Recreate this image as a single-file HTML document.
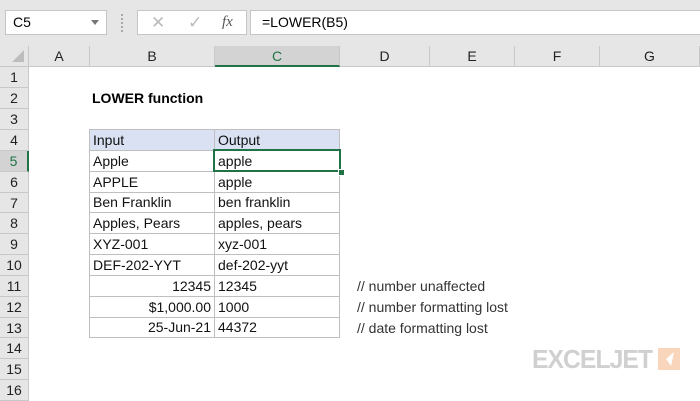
<!DOCTYPE html>
<html><head><style>
body{margin:0;width:700px;height:400px;overflow:hidden;background:#fff;font-family:"Liberation Sans",sans-serif;position:relative}
.a{position:absolute;box-sizing:border-box}
.top{left:0;top:0;width:700px;height:46px;background:#e6e6e6}
.box{background:#fff;border:1px solid #c6c6c6}
.ch{top:46px;height:21px;background:#e6e6e6;border-right:1px solid #c8c8c8;border-bottom:1px solid #c8c8c8;text-align:center;font-size:14px;line-height:21px;color:#222}
.rh{left:0;width:29px;background:#e6e6e6;border-bottom:1px solid #c8c8c8;border-right:1px solid #c8c8c8;text-align:center;font-size:14px;color:#222}
.c{font-size:14px;color:#111;padding:0 3px;white-space:nowrap;border-right:1px solid #bfbfbf;border-bottom:1px solid #bfbfbf}
.r{text-align:right}
.n{font-size:14px;color:#333;white-space:nowrap}
</style></head><body>
<div class="a top"></div>
<div class="a box" style="left:5px;top:10px;width:102px;height:25px;font-size:14px;line-height:23px;padding-left:7px">C5<span style="position:absolute;right:7px;top:9px;width:0;height:0;border-left:4px solid transparent;border-right:4px solid transparent;border-top:5px solid #777"></span></div>
<div class="a" style="left:121px;top:14px;width:2px;height:18px;border-left:2px dotted #aaa"></div>
<div class="a box" style="left:137px;top:10px;width:110px;height:25px;font-size:17px;line-height:23px;color:#bbb"><span style="position:absolute;left:13px">✕</span><span style="position:absolute;left:50px">✓</span><span style="position:absolute;left:84px;color:#555;font-family:'Liberation Serif',serif;font-style:italic;font-size:15px">fx</span></div>
<div class="a box" style="left:250px;top:10px;width:460px;height:25px;font-size:14px;line-height:23px;padding-left:11px">=LOWER(B5)</div>
<div class="a" style="left:0;top:46px;width:29px;height:21px;background:#e6e6e6;border-right:1px solid #c8c8c8;border-bottom:1px solid #c8c8c8"><div style="position:absolute;right:4px;bottom:4px;width:0;height:0;border-left:12px solid transparent;border-bottom:12px solid #bdbdbd"></div></div>
<div class="a ch" style="left:29px;width:61px">A</div>
<div class="a ch" style="left:90px;width:125px">B</div>
<div class="a ch" style="left:215px;width:125px;background:#d3d3d3;border-bottom:2px solid #217346;color:#217346">C</div>
<div class="a ch" style="left:340px;width:90px">D</div>
<div class="a ch" style="left:430px;width:85px">E</div>
<div class="a ch" style="left:515px;width:85px">F</div>
<div class="a ch" style="left:600px;width:100px">G</div>
<div class="a rh" style="top:67px;height:21px;line-height:21px">1</div>
<div class="a rh" style="top:88px;height:21px;line-height:21px">2</div>
<div class="a rh" style="top:109px;height:21px;line-height:21px">3</div>
<div class="a rh" style="top:130px;height:21px;line-height:21px">4</div>
<div class="a rh" style="top:151px;height:21px;line-height:21px;background:#d3d3d3;color:#217346;border-right:2px solid #217346">5</div>
<div class="a rh" style="top:172px;height:21px;line-height:21px">6</div>
<div class="a rh" style="top:193px;height:20px;line-height:20px">7</div>
<div class="a rh" style="top:213px;height:21px;line-height:21px">8</div>
<div class="a rh" style="top:234px;height:21px;line-height:21px">9</div>
<div class="a rh" style="top:255px;height:21px;line-height:21px">10</div>
<div class="a rh" style="top:276px;height:21px;line-height:21px">11</div>
<div class="a rh" style="top:297px;height:21px;line-height:21px">12</div>
<div class="a rh" style="top:318px;height:20px;line-height:20px">13</div>
<div class="a rh" style="top:338px;height:21px;line-height:21px">14</div>
<div class="a rh" style="top:359px;height:21px;line-height:21px">15</div>
<div class="a rh" style="top:380px;height:21px;line-height:21px">16</div>
<div class="a" style="left:92px;top:88px;height:21px;line-height:21px;font-size:14px;font-weight:bold">LOWER function</div>
<div class="a" style="left:89px;top:129px;width:1px;height:209px;background:#bfbfbf"></div>
<div class="a" style="left:89px;top:129px;width:251px;height:1px;background:#bfbfbf"></div>
<div class="a c" style="left:90px;top:130px;width:125px;height:21px;line-height:20px;background:#d9e1f2">Input</div>
<div class="a c" style="left:215px;top:130px;width:125px;height:21px;line-height:20px;background:#d9e1f2">Output</div>
<div class="a c" style="left:90px;top:151px;width:125px;height:21px;line-height:20px">Apple</div>
<div class="a c" style="left:215px;top:151px;width:125px;height:21px;line-height:20px">apple</div>
<div class="a c" style="left:90px;top:172px;width:125px;height:21px;line-height:20px">APPLE</div>
<div class="a c" style="left:215px;top:172px;width:125px;height:21px;line-height:20px">apple</div>
<div class="a c" style="left:90px;top:193px;width:125px;height:20px;line-height:19px">Ben Franklin</div>
<div class="a c" style="left:215px;top:193px;width:125px;height:20px;line-height:19px">ben franklin</div>
<div class="a c" style="left:90px;top:213px;width:125px;height:21px;line-height:20px">Apples, Pears</div>
<div class="a c" style="left:215px;top:213px;width:125px;height:21px;line-height:20px">apples, pears</div>
<div class="a c" style="left:90px;top:234px;width:125px;height:21px;line-height:20px">XYZ-001</div>
<div class="a c" style="left:215px;top:234px;width:125px;height:21px;line-height:20px">xyz-001</div>
<div class="a c" style="left:90px;top:255px;width:125px;height:21px;line-height:20px">DEF-202-YYT</div>
<div class="a c" style="left:215px;top:255px;width:125px;height:21px;line-height:20px">def-202-yyt</div>
<div class="a c r" style="left:90px;top:276px;width:125px;height:21px;line-height:20px">12345</div>
<div class="a c" style="left:215px;top:276px;width:125px;height:21px;line-height:20px">12345</div>
<div class="a c r" style="left:90px;top:297px;width:125px;height:21px;line-height:20px">$1,000.00</div>
<div class="a c" style="left:215px;top:297px;width:125px;height:21px;line-height:20px">1000</div>
<div class="a c r" style="left:90px;top:318px;width:125px;height:20px;line-height:19px">25-Jun-21</div>
<div class="a c" style="left:215px;top:318px;width:125px;height:20px;line-height:19px">44372</div>
<div class="a" style="left:213px;top:149px;width:128px;height:23px;border:2px solid #217346"></div>
<div class="a" style="left:338px;top:169px;width:5px;height:5px;background:#217346;border:1px solid #fff;box-sizing:content-box"></div>
<div class="a n" style="left:357px;top:276px;line-height:21px">// number unaffected</div>
<div class="a n" style="left:357px;top:297px;line-height:21px">// number formatting lost</div>
<div class="a n" style="left:357px;top:318px;line-height:20px">// date formatting lost</div>
<div class="a" style="left:532px;top:344px;font-size:26px;font-weight:bold;color:#d0d0d0;letter-spacing:-1px;line-height:30px;transform:scaleX(0.95);transform-origin:left">EXCELJET</div>
<div class="a" style="left:658px;top:348px;width:22px;height:22px;background:#f9d5bc"><svg width="22" height="22"><path d="M16 4 L8 11 L13 18 Z" fill="#fff"/></svg></div>
</body></html>
